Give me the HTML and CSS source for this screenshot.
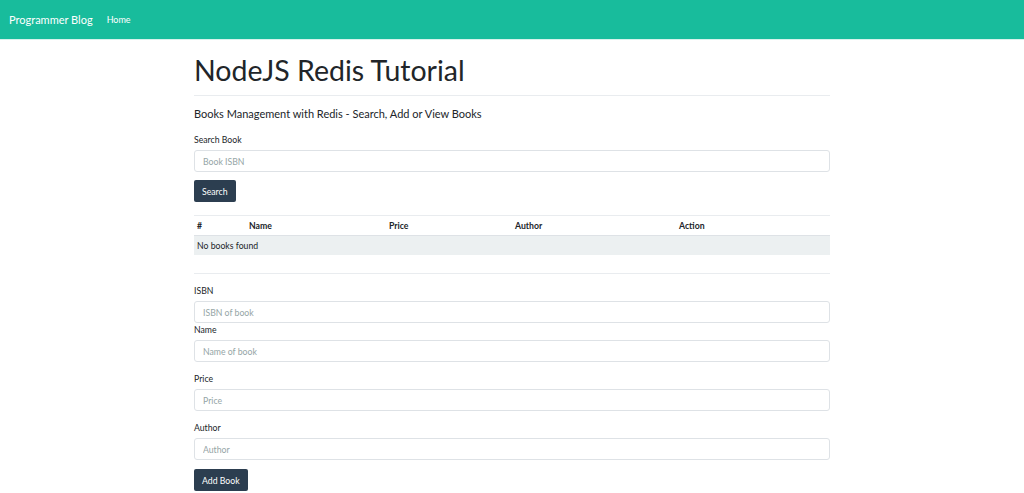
FILE: index.html
```html
<!DOCTYPE html>
<html lang="en">
<head>
    <meta charset="UTF-8">
    <meta name="viewport" content="width=device-width, initial-scale=1.0">
    <title>NodeJS Redis Tutorial</title>
    <link rel="stylesheet" href="styles.css">
</head>
<body>
    <nav class="navbar">
        <a class="brand" href="#">Programmer Blog</a>
        <a class="nav-link" href="#">Home</a>
    </nav>
    <div class="container">
        <h1>NodeJS Redis Tutorial</h1>
        <hr>
        <h4>Books Management with Redis - Search, Add or View Books</h4>

        <div class="form-group search-group">
            <label for="search">Search Book</label>
            <input type="text" id="search" placeholder="Book ISBN">
        </div>
        <button class="btn">Search</button>

        <table class="books">
            <thead>
                <tr>
                    <th class="col-id">#</th>
                    <th class="col-name">Name</th>
                    <th class="col-price">Price</th>
                    <th class="col-author">Author</th>
                    <th>Action</th>
                </tr>
            </thead>
            <tbody>
                <tr>
                    <td colspan="5">No books found</td>
                </tr>
            </tbody>
        </table>
        <hr class="sep">

        <div class="form-group tight">
            <label for="isbn">ISBN</label>
            <input type="text" id="isbn" placeholder="ISBN of book">
        </div>
        <div class="form-group">
            <label for="name">Name</label>
            <input type="text" id="name" placeholder="Name of book">
        </div>
        <div class="form-group">
            <label for="price">Price</label>
            <input type="text" id="price" placeholder="Price">
        </div>
        <div class="form-group last">
            <label for="author">Author</label>
            <input type="text" id="author" placeholder="Author">
        </div>
        <button class="btn">Add Book</button>
    </div>
</body>
</html>
```

FILE: styles.css
```css
body {
    margin: 0;
    font-family: Lato, "Open Sans", sans-serif;
    font-size: 8.7px;
    color: #2c3e50;
    background-color: #fff;
}
.navbar {
    height: 40px;
    background-color: #18bc9c;
    display: flex;
    align-items: center;
    padding: 0 9px;
    border-bottom: 1px solid #d8f2ec;
    box-sizing: border-box;
}
.navbar a {
    color: #fff;
    text-decoration: none;
}
.brand {
    font-size: 11px;
    margin-right: 14px;
}
.nav-link {
    font-size: 9px;
}
.container {
    width: 636px;
    margin: 0 auto;
    padding-top: 13px;
}
h1 {
    font-size: 28.5px;
    font-weight: 400;
    margin: 0;
    line-height: 34px;
    color: #212529;
}
hr {
    border: 0;
    border-top: 1px solid #e9ecef;
    margin: 8px 0 10px;
}
h4 {
    font-size: 11px;
    font-weight: 400;
    margin: 0 0 12px;
    line-height: 16px;
    color: #212529;
}
.form-group {
    margin-bottom: 11px;
}
.form-group.tight {
    margin-bottom: 1px;
}
.form-group.search-group {
    margin-bottom: 8px;
}
.form-group.last {
    margin-bottom: 9px;
}
.form-group label {
    display: block;
    margin-bottom: 4px;
    line-height: 12px;
    color: #212529;
}
.form-group input {
    display: block;
    width: 100%;
    height: 22px;
    box-sizing: border-box;
    padding: 0 8px;
    border: 1px solid #dee2e6;
    border-radius: 3px;
    font-family: inherit;
    font-size: 8.7px;
    color: #2c3e50;
}
.form-group input::placeholder {
    color: #95a5a6;
}
.btn {
    display: block;
    height: 22px;
    padding: 0 8px;
    border: none;
    border-radius: 2px;
    background-color: #2c3e50;
    color: #fff;
    font-family: inherit;
    font-size: 8.7px;
    cursor: pointer;
}
.books {
    width: 100%;
    border-collapse: collapse;
    margin-top: 13px;
    color: #212529;
}
.books th,
.books td {
    text-align: left;
    padding: 0 3px;
    height: 19px;
}
.books th {
    border-top: 1px solid #e9ecef;
    border-bottom: 1px solid #dee2e6;
    font-weight: 700;
}
.books td {
    background-color: #ecf0f1;
}
.col-id { width: 46px; }
.col-name { width: 134px; }
.col-price { width: 120px; }
.col-author { width: 158px; }
hr.sep {
    margin: 18px 0 11px;
}
```
